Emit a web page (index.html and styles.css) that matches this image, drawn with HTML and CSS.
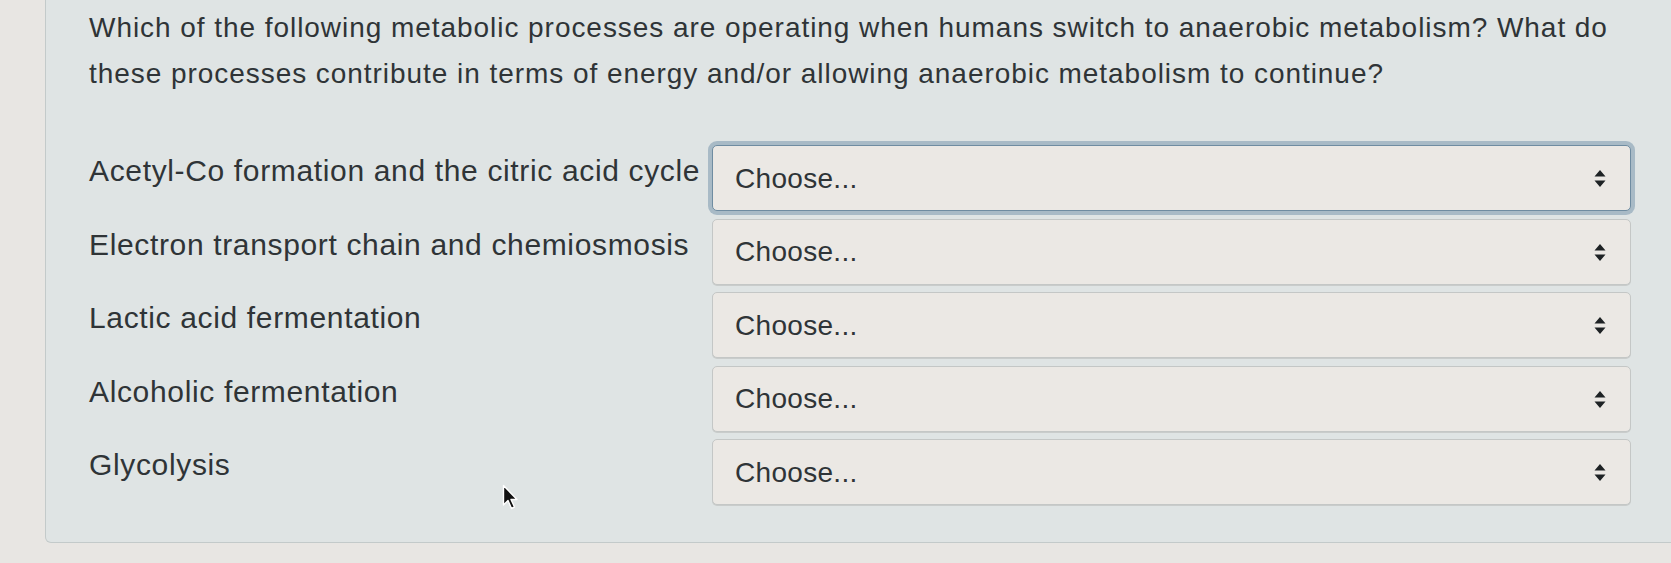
FILE: index.html
```html
<!DOCTYPE html>
<html lang="en">
<head>
  <meta charset="UTF-8">
  <meta name="viewport" content="width=device-width, initial-scale=1.0">
  <title>Match question</title>
  <link rel="stylesheet" href="styles.css">
</head>
<body>
  <div class="que">
    <p class="qtext">Which of the following metabolic processes are operating when humans switch to anaerobic metabolism? What do these processes contribute in terms of energy and/or allowing anaerobic metabolism to continue?</p>

    <div class="answer">
      <label class="stem" for="sub0">Acetyl-Co formation and the citric acid cycle</label>
      <div class="choice">
        <select id="sub0" class="focused"><option>Choose...</option></select>
        <svg class="arrows" width="12" height="17" viewBox="0 0 12 17"><path d="M6 0 L11.5 6.5 H0.5 Z M0.5 10.5 H11.5 L6 17 Z" fill="#1e2224"/></svg>
      </div>

      <label class="stem" for="sub1">Electron transport chain and chemiosmosis</label>
      <div class="choice">
        <select id="sub1"><option>Choose...</option></select>
        <svg class="arrows" width="12" height="17" viewBox="0 0 12 17"><path d="M6 0 L11.5 6.5 H0.5 Z M0.5 10.5 H11.5 L6 17 Z" fill="#1e2224"/></svg>
      </div>

      <label class="stem" for="sub2">Lactic acid fermentation</label>
      <div class="choice">
        <select id="sub2"><option>Choose...</option></select>
        <svg class="arrows" width="12" height="17" viewBox="0 0 12 17"><path d="M6 0 L11.5 6.5 H0.5 Z M0.5 10.5 H11.5 L6 17 Z" fill="#1e2224"/></svg>
      </div>

      <label class="stem" for="sub3">Alcoholic fermentation</label>
      <div class="choice">
        <select id="sub3"><option>Choose...</option></select>
        <svg class="arrows" width="12" height="17" viewBox="0 0 12 17"><path d="M6 0 L11.5 6.5 H0.5 Z M0.5 10.5 H11.5 L6 17 Z" fill="#1e2224"/></svg>
      </div>

      <label class="stem" for="sub4">Glycolysis</label>
      <div class="choice">
        <select id="sub4"><option>Choose...</option></select>
        <svg class="arrows" width="12" height="17" viewBox="0 0 12 17"><path d="M6 0 L11.5 6.5 H0.5 Z M0.5 10.5 H11.5 L6 17 Z" fill="#1e2224"/></svg>
      </div>
    </div>

    <!-- mouse pointer -->
    <svg class="pointer" width="18" height="27" viewBox="0 0 18 27">
      <path d="M1.5 1.5 V21 L6 16.5 L9.5 24.5 L12.5 23 L9 15.5 H15 Z" fill="#111" stroke="#fff" stroke-width="1.4" stroke-linejoin="round"/>
    </svg>
  </div>
</body>
</html>
```

FILE: styles.css
```css
html, body {
  margin: 0;
  height: 100%;
  overflow: hidden;
}
body {
  background-color: #e8e6e3;
  font-family: "Liberation Sans", Arial, Helvetica, sans-serif;
  color: #2f3437;
}
.que {
  position: relative;
  margin: 0 -40px 0 45px;
  padding: 5px 0 37px 43px;
  background-color: #dfe4e4;
  border: 1px solid #c3caca;
  border-top: none;
  border-radius: 0 0 6px 6px;
}
.qtext {
  margin: 0 0 48px;
  width: 1548px;
  font-size: 28px;
  line-height: 46px;
  letter-spacing: 0.95px;
}
.answer {
  display: grid;
  grid-template-columns: 623px 919px;
  row-gap: 7.5px;
}
.stem {
  padding-top: 5px;
  font-size: 30px;
  line-height: 42px;
  letter-spacing: 0.65px;
  white-space: nowrap;
}
.choice {
  position: relative;
  height: 66px;
}
select {
  appearance: none;
  -webkit-appearance: none;
  box-sizing: border-box;
  width: 100%;
  height: 100%;
  margin: 0;
  padding: 0 60px 0 22px;
  font-family: inherit;
  font-size: 28px;
  letter-spacing: 0.3px;
  color: #2f3437;
  background-color: #ebe8e4;
  border: 1px solid #c4c7c6;
  border-radius: 5px;
  box-shadow: 0 1px 0 #c9cccb;
}
select.focused {
  border-color: #6f8ca1;
  box-shadow: 0 0 0 4px #a8bac6;
}
.arrows {
  position: absolute;
  right: 25px;
  top: 25px;
  pointer-events: none;
}
.pointer {
  position: absolute;
  left: 456px;
  top: 484px;
}
```
